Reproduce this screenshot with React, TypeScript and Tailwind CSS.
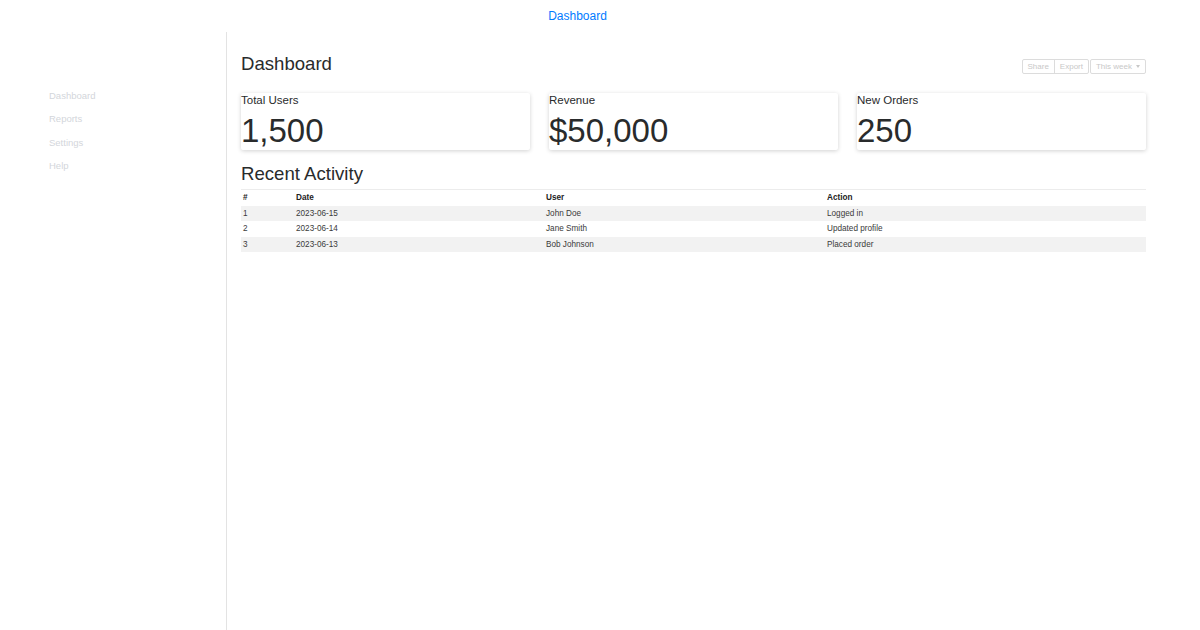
import React from "react";

const rows = [
  { id: 1, date: "2023-06-15", user: "John Doe", action: "Logged in" },
  { id: 2, date: "2023-06-14", user: "Jane Smith", action: "Updated profile" },
  { id: 3, date: "2023-06-13", user: "Bob Johnson", action: "Placed order" },
];

const cards = [
  { title: "Total Users", value: "1,500" },
  { title: "Revenue", value: "$50,000" },
  { title: "New Orders", value: "250" },
];

export default function App() {
  return (
    <div className="min-h-[630px] bg-white text-[#292b2c] flex flex-col" style={{ fontFamily: '"Liberation Sans", Arial, sans-serif' }}>
      <div className="h-[32px] flex items-center justify-center pr-[45px]">
        <a className="text-[12px] text-[#007bff]">Dashboard</a>
      </div>
      <div className="flex flex-1">
        <nav className="w-[227px] shrink-0 border-r border-[#e3e3e3] pl-[49px] pt-[52px] flex flex-col">
          {["Dashboard", "Reports", "Settings", "Help"].map((l) => (
            <a key={l} className="text-[9.5px] leading-[23.3px] text-[#d3d6db]">{l}</a>
          ))}
        </nav>
        <main className="flex-1 pl-[14px] pr-[54px] pt-[21px]">
          <div className="flex items-center justify-between h-[22px]">
            <h1 className="text-[18.6px] leading-[22px]">Dashboard</h1>
            <div className="flex items-center mt-[4px] text-[8px] text-[#c8c8c8]">
              <div className="flex border border-[#dcdcdc] rounded-[2px] h-[15px]">
                <span className="px-[5px] leading-[13px]">Share</span>
                <span className="px-[5px] leading-[13px] border-l border-[#dcdcdc]">Export</span>
              </div>
              <div className="flex items-center ml-[1px] border border-[#dcdcdc] rounded-[2px] h-[15px] px-[5px]">
                <span className="leading-[13px]">This week</span>
                <span className="ml-[4px] w-0 h-0 border-l-[2.5px] border-r-[2.5px] border-t-[3px] border-l-transparent border-r-transparent border-t-[#c8c8c8]" />
              </div>
            </div>
          </div>
          <div className="grid grid-cols-3 gap-[19px] mt-[18px]">
            {cards.map((c) => (
              <div key={c.title} className="h-[57px] bg-white shadow-[0_1px_4px_rgba(0,0,0,0.18)] rounded-[2px]">
                <div className="text-[11.5px] leading-[14px]">{c.title}</div>
                <div className="text-[33px] leading-[44px] mt-[2px]">{c.value}</div>
              </div>
            ))}
          </div>
          <h2 className="text-[18.6px] leading-[22px] mt-[13px]">Recent Activity</h2>
          <table className="w-full mt-[4px] border-collapse text-[8.2px] text-[#3a3a3a] table-fixed">
            <colgroup>
              <col className="w-[53px]" />
              <col className="w-[250px]" />
              <col className="w-[281px]" />
              <col />
            </colgroup>
            <thead>
              <tr className="border-t border-[#ececec] h-[16px]">
                <th className="text-left font-bold pl-[2px] pt-[1px] text-[#222]">#</th>
                <th className="text-left font-bold pl-[2px] pt-[1px] text-[#222]">Date</th>
                <th className="text-left font-bold pl-[2px] pt-[1px] text-[#222]">User</th>
                <th className="text-left font-bold pl-[2px] pt-[1px] text-[#222]">Action</th>
              </tr>
            </thead>
            <tbody>
              {rows.map((r, i) => (
                <tr key={r.id} className={`h-[15.5px] ${i % 2 === 0 ? "bg-[#f2f2f2]" : "bg-white"}`}>
                  <td className="pl-[2px] pt-[1px]">{r.id}</td>
                  <td className="pl-[2px] pt-[1px]">{r.date}</td>
                  <td className="pl-[2px] pt-[1px]">{r.user}</td>
                  <td className="pl-[2px] pt-[1px]">{r.action}</td>
                </tr>
              ))}
            </tbody>
          </table>
        </main>
      </div>
    </div>
  );
}
